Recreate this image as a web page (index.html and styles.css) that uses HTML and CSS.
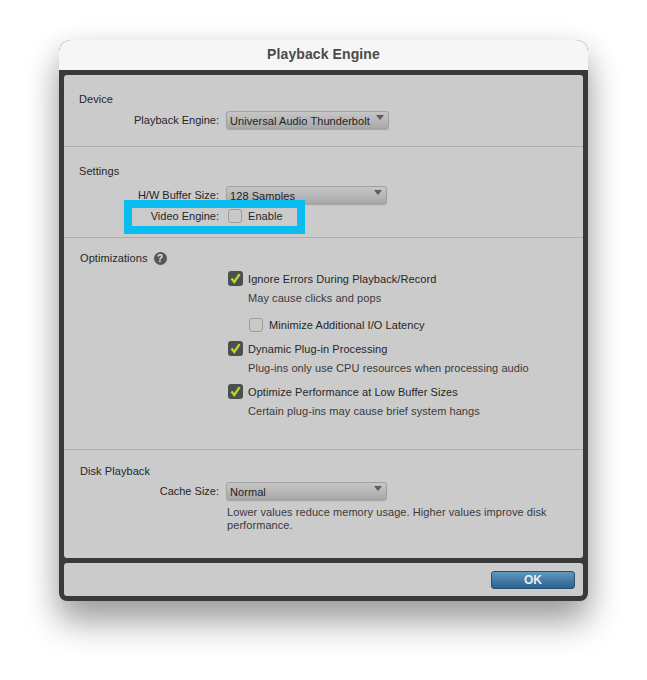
FILE: index.html
```html
<!DOCTYPE html>
<html lang="en">
<head>
    <meta charset="utf-8">
    <title>Playback Engine</title>
    <link rel="stylesheet" href="styles.css">
</head>
<body>
    <div class="window">
        <div class="titleBar">Playback Engine</div>
        <div class="mainPanel">
            <div class="section deviceSection">
                <div class="sectionTitle">Device</div>
                <div class="formRow">
                    <div class="rowLabel">Playback Engine:</div>
                    <div class="dropdown deviceDropdown">Universal Audio Thunderbolt<span class="arrow"></span></div>
                </div>
            </div>
            <div class="section settingsSection">
                <div class="sectionTitle">Settings</div>
                <div class="formRow bufferRow">
                    <div class="rowLabel">H/W Buffer Size:</div>
                    <div class="dropdown">128 Samples<span class="arrow"></span></div>
                </div>
                <div class="formRow videoRow">
                    <div class="rowLabel">Video Engine:</div>
                    <div class="emptyBox videoBox"></div>
                    <div class="enableText">Enable</div>
                </div>
            </div>
            <div class="section optimizeSection">
                <div class="sectionTitle optimizeTitle">Optimizations <span class="helpIcon">?</span></div>
                <div class="optionList">
                    <div class="option">
                        <svg class="checkBox" viewBox="0 0 15 15"><rect width="15" height="15" rx="3" fill="#4b4f50"/><path d="M3.5 7.5 L6.3 11 L11.6 3.2" fill="none" stroke="#b9d82f" stroke-width="2.3"/></svg>
                        <div class="optionText">Ignore Errors During Playback/Record</div>
                    </div>
                    <div class="optionNote">May cause clicks and pops</div>
                    <div class="option subOption">
                        <div class="emptyBox"></div>
                        <div class="optionText">Minimize Additional I/O Latency</div>
                    </div>
                    <div class="option dynamicOption">
                        <svg class="checkBox" viewBox="0 0 15 15"><rect width="15" height="15" rx="3" fill="#4b4f50"/><path d="M3.5 7.5 L6.3 11 L11.6 3.2" fill="none" stroke="#b9d82f" stroke-width="2.3"/></svg>
                        <div class="optionText">Dynamic Plug-in Processing</div>
                    </div>
                    <div class="optionNote">Plug-ins only use CPU resources when processing audio</div>
                    <div class="option lowBufferOption">
                        <svg class="checkBox" viewBox="0 0 15 15"><rect width="15" height="15" rx="3" fill="#4b4f50"/><path d="M3.5 7.5 L6.3 11 L11.6 3.2" fill="none" stroke="#b9d82f" stroke-width="2.3"/></svg>
                        <div class="optionText">Optimize Performance at Low Buffer Sizes</div>
                    </div>
                    <div class="optionNote">Certain plug-ins may cause brief system hangs</div>
                </div>
            </div>
            <div class="section diskSection">
                <div class="sectionTitle diskTitle">Disk Playback</div>
                <div class="formRow cacheRow">
                    <div class="rowLabel">Cache Size:</div>
                    <div class="dropdown">Normal<span class="arrow"></span></div>
                </div>
                <div class="cacheNote">Lower values reduce memory usage. Higher values improve disk performance.</div>
            </div>
        </div>
        <div class="bottomPanel">
            <div class="okButton">OK</div>
        </div>
        <div class="highlight"></div>
    </div>
</body>
</html>
```

FILE: styles.css
```css
body {
    margin: 0;
    height: 680px;
    overflow: hidden;
    background-color: #ffffff;
    font-family: "Liberation Sans", Arial, sans-serif;
    font-size: 11px;
    letter-spacing: 0.07px;
    color: #262626;
}

.window {
    position: relative;
    margin: 40px 0 0 59px;
    width: 529px;
    height: 561px;
    border-radius: 12px 12px 8px 8px;
    background-color: #3a3a3a;
    box-shadow: 0 22px 34px rgba(0, 0, 0, 0.33), 0 6px 30px rgba(0, 0, 0, 0.12);
}

.titleBar {
    height: 30px;
    line-height: 29px;
    text-align: center;
    font-size: 14px;
    font-weight: bold;
    letter-spacing: 0.1px;
    color: #4a4a4a;
    background-color: #f6f6f6;
    border-radius: 12px 12px 0 0;
}

.mainPanel {
    margin: 5px 5px 0 5px;
    height: 483px;
    background-color: #cbcbcb;
    border-radius: 3px;
}

.section {
    box-sizing: border-box;
    padding-left: 15px;
    border-bottom: 1px solid #aeaeae;
}

.deviceSection {
    height: 72px;
    padding-top: 17px;
}

.settingsSection {
    height: 91px;
    padding-top: 17px;
}

.optimizeSection {
    height: 212px;
    padding-top: 13px;
}

.diskSection {
    height: 108px;
    padding-top: 14px;
    border-bottom: none;
}

.sectionTitle {
    height: 14px;
    line-height: 14px;
}

.optimizeTitle {
    display: flex;
    align-items: center;
    gap: 6px;
    margin-left: 1px;
}

.diskTitle {
    margin-left: 1px;
}

.helpIcon {
    width: 13px;
    height: 13px;
    line-height: 13px;
    border-radius: 50%;
    text-align: center;
    font-size: 10px;
    font-weight: bold;
    color: #e4e4e4;
    background-color: #575757;
}

.formRow {
    display: flex;
    align-items: center;
    height: 18px;
    margin-top: 5px;
}

.bufferRow {
    margin-top: 8px;
}

.videoRow {
    margin-top: 3px;
}

.cacheRow {
    margin-top: 4px;
}

.rowLabel {
    width: 140px;
    text-align: right;
    margin-right: 7px;
    flex-shrink: 0;
    letter-spacing: 0;
}

.dropdown {
    position: relative;
    box-sizing: border-box;
    width: 161px;
    height: 18px;
    line-height: 19px;
    padding-left: 3px;
    border: 1px solid #a2a2a2;
    border-radius: 3px;
    background: linear-gradient(#c6c6c6, #a9a9a9);
    box-shadow: 0 1px 1px rgba(0, 0, 0, 0.2);
    color: #1e1e1e;
}

.deviceDropdown {
    width: 163px;
}

.arrow {
    position: absolute;
    right: 4px;
    top: 3px;
    border-left: 4px solid transparent;
    border-right: 4px solid transparent;
    border-top: 5px solid #5c5c5c;
}

.emptyBox {
    box-sizing: border-box;
    width: 14px;
    height: 14px;
    border: 1px solid #9d9d9d;
    border-radius: 3px;
    background-color: #c9c9c9;
    flex-shrink: 0;
}

.videoBox {
    margin-left: 2px;
}

.enableText {
    margin-left: 6px;
}

.optionList {
    margin: 6px 0 0 149px;
}

.option {
    display: flex;
    align-items: center;
    gap: 5px;
    height: 15px;
}

.checkBox {
    width: 15px;
    height: 15px;
    flex-shrink: 0;
}

.optionNote {
    height: 14px;
    line-height: 14px;
    margin: 5px 0 0 20px;
    color: #3a3a3a;
}

.subOption {
    margin: 12px 0 0 21px;
    gap: 6px;
}

.dynamicOption {
    margin-top: 9px;
}

.lowBufferOption {
    margin-top: 9px;
}

.cacheNote {
    width: 320px;
    margin: 6px 0 0 148px;
    line-height: 13px;
    color: #3a3a3a;
}

.bottomPanel {
    display: flex;
    align-items: center;
    justify-content: flex-end;
    box-sizing: border-box;
    margin: 5px 5px 0 5px;
    height: 33px;
    padding-right: 8px;
    background-color: #cbcbcb;
    border-radius: 3px;
}

.okButton {
    width: 84px;
    height: 18px;
    line-height: 17px;
    text-align: center;
    font-weight: bold;
    font-size: 12px;
    color: #e8eef3;
    border-radius: 3px;
    border: 1px solid #2b4f70;
    box-sizing: border-box;
    background: linear-gradient(#6198bf, #2a628f);
}

.highlight {
    position: absolute;
    left: 65px;
    top: 160px;
    width: 165px;
    height: 18px;
    border: 8px solid #0bbcf0;
}
```
